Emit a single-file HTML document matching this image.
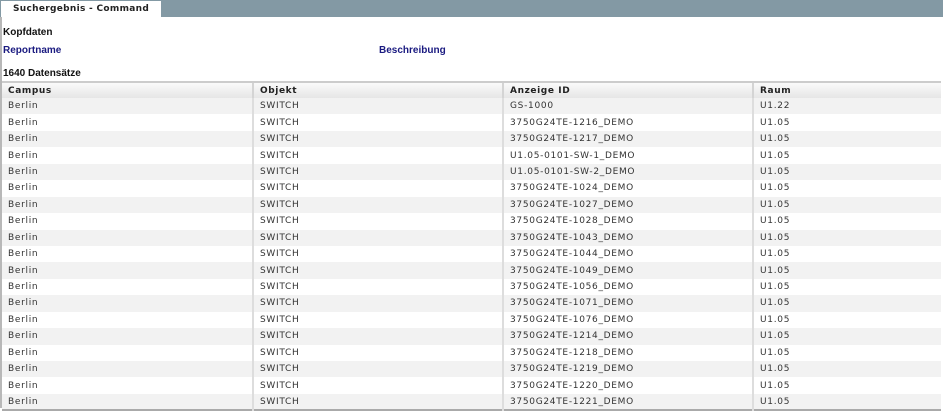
<!DOCTYPE html>
<html><head><meta charset="utf-8"><style>
*{margin:0;padding:0;box-sizing:border-box}
body{width:943px;height:408px;overflow:hidden;background:#fff;font-family:"DejaVu Sans",Verdana,sans-serif;position:relative}
.bar{position:absolute;left:0;top:0;width:943px;height:17px;background:#8399a4}
.tab{position:absolute;left:1px;top:1px;width:160px;height:17px;background:#fff;font:bold 9px "DejaVu Sans",sans-serif;color:#222;padding:3px 0 0 12px;letter-spacing:0.3px}
.lb{position:absolute;left:0;top:17px;width:2px;height:391px;background:#b8b8b8}
.t{position:absolute;font:bold 10px "Liberation Sans",Arial,sans-serif}
table{position:absolute;left:2px;top:81px;width:939px;border-collapse:collapse;font-size:9px;letter-spacing:0.7px;color:#333;border-bottom:2px solid #aaa}
th{height:16px;text-align:left;font-weight:bold;color:#222;background:linear-gradient(#fafafa,#e6e6e6);border-top:2px solid #ccc;border-left:2px solid #d4d4d4;padding-left:6px;letter-spacing:0.6px}
td{height:16.45px;padding-left:6px;border-left:2px solid #ddd;line-height:14px}
th:first-child,td:first-child{border-left:none}
tr:nth-child(even) td{background:#f2f2f2}
</style></head><body>
<div class="bar"></div><div class="tab">Suchergebnis - Command</div>
<div class="lb"></div>
<div class="t" style="left:3px;top:27px;color:#111">Kopfdaten</div>
<div class="t" style="left:3px;top:45px;color:#1a1a80">Reportname</div>
<div class="t" style="left:379px;top:45px;color:#1a1a80">Beschreibung</div>
<div class="t" style="left:3px;top:68px;color:#111">1640 Datensätze</div>
<div style="position:absolute;left:410px;top:178px;width:2px;height:2px;background:#33c"></div>
<table>
<tr><th style="width:251px">Campus</th><th style="width:250px">Objekt</th><th style="width:250px">Anzeige ID</th><th>Raum</th></tr>
<tr><td>Berlin</td><td>SWITCH</td><td>GS-1000</td><td>U1.22</td></tr>
<tr><td>Berlin</td><td>SWITCH</td><td>3750G24TE-1216_DEMO</td><td>U1.05</td></tr>
<tr><td>Berlin</td><td>SWITCH</td><td>3750G24TE-1217_DEMO</td><td>U1.05</td></tr>
<tr><td>Berlin</td><td>SWITCH</td><td>U1.05-0101-SW-1_DEMO</td><td>U1.05</td></tr>
<tr><td>Berlin</td><td>SWITCH</td><td>U1.05-0101-SW-2_DEMO</td><td>U1.05</td></tr>
<tr><td>Berlin</td><td>SWITCH</td><td>3750G24TE-1024_DEMO</td><td>U1.05</td></tr>
<tr><td>Berlin</td><td>SWITCH</td><td>3750G24TE-1027_DEMO</td><td>U1.05</td></tr>
<tr><td>Berlin</td><td>SWITCH</td><td>3750G24TE-1028_DEMO</td><td>U1.05</td></tr>
<tr><td>Berlin</td><td>SWITCH</td><td>3750G24TE-1043_DEMO</td><td>U1.05</td></tr>
<tr><td>Berlin</td><td>SWITCH</td><td>3750G24TE-1044_DEMO</td><td>U1.05</td></tr>
<tr><td>Berlin</td><td>SWITCH</td><td>3750G24TE-1049_DEMO</td><td>U1.05</td></tr>
<tr><td>Berlin</td><td>SWITCH</td><td>3750G24TE-1056_DEMO</td><td>U1.05</td></tr>
<tr><td>Berlin</td><td>SWITCH</td><td>3750G24TE-1071_DEMO</td><td>U1.05</td></tr>
<tr><td>Berlin</td><td>SWITCH</td><td>3750G24TE-1076_DEMO</td><td>U1.05</td></tr>
<tr><td>Berlin</td><td>SWITCH</td><td>3750G24TE-1214_DEMO</td><td>U1.05</td></tr>
<tr><td>Berlin</td><td>SWITCH</td><td>3750G24TE-1218_DEMO</td><td>U1.05</td></tr>
<tr><td>Berlin</td><td>SWITCH</td><td>3750G24TE-1219_DEMO</td><td>U1.05</td></tr>
<tr><td>Berlin</td><td>SWITCH</td><td>3750G24TE-1220_DEMO</td><td>U1.05</td></tr>
<tr><td>Berlin</td><td>SWITCH</td><td>3750G24TE-1221_DEMO</td><td>U1.05</td></tr>
</table>
</body></html>
